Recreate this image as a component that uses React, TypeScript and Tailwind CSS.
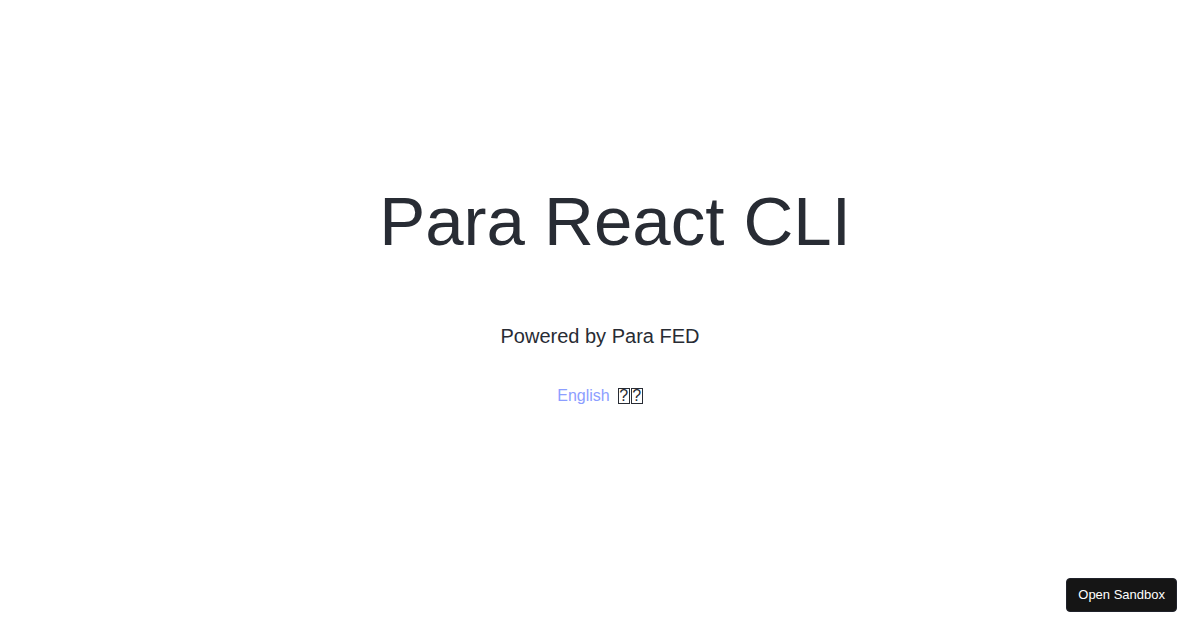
type Language = {
  code: string;
  label: string;
};

const languages: Language[] = [
  { code: "en", label: "English" },
  { code: "zh", label: "??" },
];

function BoxedCharacter({ character }: { character: string }) {
  return (
    <span className="flex h-4 w-3 items-center justify-center border border-[#282c34] text-base leading-none">
      {character}
    </span>
  );
}

export default function App() {
  return (
    <div className="flex min-h-screen flex-col bg-white font-['Liberation_Sans',Arial,sans-serif] text-[#282c34]">
      <main className="flex flex-1 flex-col items-center pt-[182px] text-center">
        <h1 className="pl-[30px] text-[69px] leading-[80px]">Para React CLI</h1>
        <p className="mt-[62px] text-xl leading-6">Powered by Para FED</p>

        <nav aria-label="Language" className="mt-9 flex items-center gap-2 text-base leading-6">
          {languages.map((language) =>
            language.code === "en" ? (
              <a key={language.code} href="#en" className="text-[#8c9eff]">
                {language.label}
              </a>
            ) : (
              <a key={language.code} href="#zh" className="flex gap-px">
                {language.label.split("").map((character, index) => (
                  <BoxedCharacter key={index} character={character} />
                ))}
              </a>
            ),
          )}
        </nav>
      </main>

      <button
        type="button"
        className="fixed right-[23px] bottom-[18px] rounded border border-[#20222b] bg-[#151515] px-[11px] py-2 text-[13px] leading-4 text-white"
      >
        Open Sandbox
      </button>
    </div>
  );
}
